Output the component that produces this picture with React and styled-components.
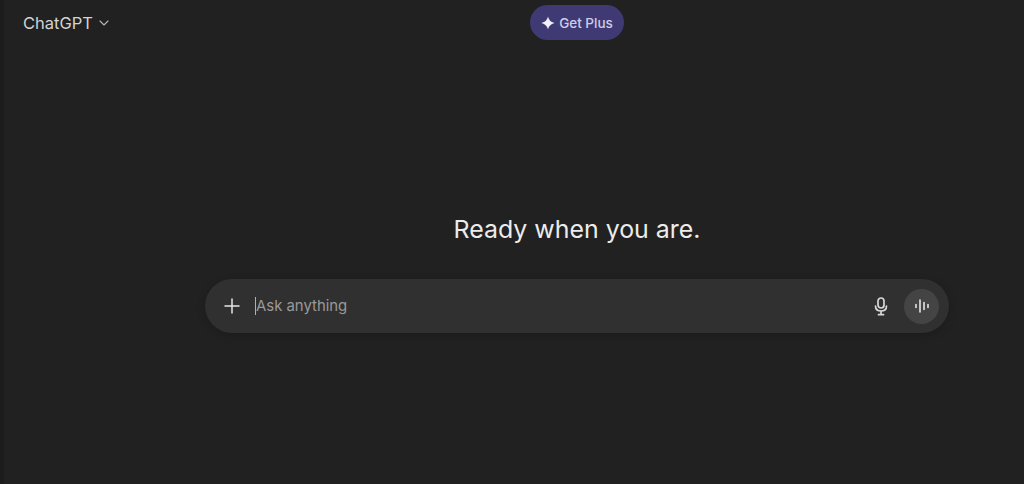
import React from 'react';
import styled, { createGlobalStyle } from 'styled-components';
import { ChevronDown, Plus } from 'lucide-react';

const Global = createGlobalStyle`
  html, body { margin: 0; padding: 0; background: #212121; }
  body { font-family: Inter, "Liberation Sans", sans-serif; }
`;

function Sparkle() {
  return (
    <svg width="14" height="14" viewBox="0 0 14 14" fill="#f1f0fb">
      <path d="M7 .4c.9 3.600 2.600 5.300 6.600 6.600-4 1.300-5.700 3-6.600 6.600-.9-3.600-2.600-5.300-6.600-6.600 4-1.300 5.700-3 6.600-6.600z" />
    </svg>
  );
}

function Mic() {
  return (
    <svg width="16" height="19" viewBox="0 0 16 19" fill="none" stroke="#d6d6d6" strokeWidth="1.700" strokeLinecap="round">
      <rect x="5" y="1" width="6" height="10" rx="3" />
      <path d="M2.500 9c0 3.300 2.300 5 5.500 5s5.500-1.700 5.500-5" />
      <path d="M8 14v3.500M5.500 17.700h5" />
    </svg>
  );
}

function Voice() {
  return (
    <svg width="14" height="14" viewBox="0 0 14 14" fill="none" stroke="#e4e4e4" strokeWidth="1.600" strokeLinecap="round">
      <path d="M1 5.500v3M5 1v12M9 3.500v7M13 5.500v3" />
    </svg>
  );
}

export default function App() {
  return (
    <>
      <Global />
      <Page>
        <Rail />
        <Content>
          <Header>
            <ModelPicker>
              ChatGPT
              <ChevronDown size={16} strokeWidth={1.7} color="#b4b4b4" />
            </ModelPicker>
            <PlusButton>
              <Sparkle />
              Get Plus
            </PlusButton>
          </Header>
          <Center>
            <Title>Ready when you are.</Title>
            <Composer>
              <Plus size={24} strokeWidth={1.5} color="#e6e6e6" />
              <Field>
                <Caret />
                Ask anything
              </Field>
              <Mic />
              <VoiceButton>
                <Voice />
              </VoiceButton>
            </Composer>
          </Center>
        </Content>
      </Page>
    </>
  );
}

const Page = styled.div`
  display: flex;
  width: 1024px;
  height: 484px;
  overflow: hidden;
  background: #212121;
`;

const Rail = styled.div`
  width: 4px;
  background: #1c1c1c;
`;

const Content = styled.div`
  flex: 1;
  display: flex;
  flex-direction: column;
`;

const Header = styled.div`
  display: grid;
  grid-template-columns: 526px 94px;
  height: 45px;
  padding-top: 5px;
  box-sizing: border-box;
`;

const ModelPicker = styled.div`
  display: flex;
  align-items: center;
  gap: 3px;
  height: 35px;
  padding-left: 19px;
  color: #d4d4d4;
  font-size: 16.500px;
`;

const PlusButton = styled.div`
  display: flex;
  align-items: center;
  justify-content: center;
  gap: 4px;
  height: 35px;
  border-radius: 18px;
  background: #3f3a73;
  color: #cfcde6;
  font-size: 13.500px;
  font-weight: 500;
`;

const Center = styled.div`
  display: flex;
  flex-direction: column;
  align-items: center;
  width: 744px;
  margin-left: 201px;
  padding-top: 167px;
`;

const Title = styled.h1`
  margin: 0 0 32px;
  color: #ececec;
  font-size: 24.900px;
  line-height: 35px;
  font-weight: 400;
`;

const Composer = styled.div`
  display: flex;
  align-items: center;
  width: 100%;
  height: 54px;
  box-sizing: border-box;
  padding: 0 10px 0 15px;
  border-radius: 27px;
  background: #303030;
  box-shadow: 0 2px 8px rgba(0, 0, 0, 0.18);
`;

const Field = styled.div`
  flex: 1;
  display: flex;
  align-items: center;
  margin-left: 11px;
  padding-bottom: 1px;
  color: #9a9a9a;
  font-size: 14.900px;
`;

const Caret = styled.span`
  width: 1px;
  height: 18px;
  background: #b0b0b0;
`;

const VoiceButton = styled.div`
  display: flex;
  align-items: center;
  justify-content: center;
  width: 35px;
  height: 35px;
  margin-left: 15px;
  border-radius: 50%;
  background: #444444;
`;
